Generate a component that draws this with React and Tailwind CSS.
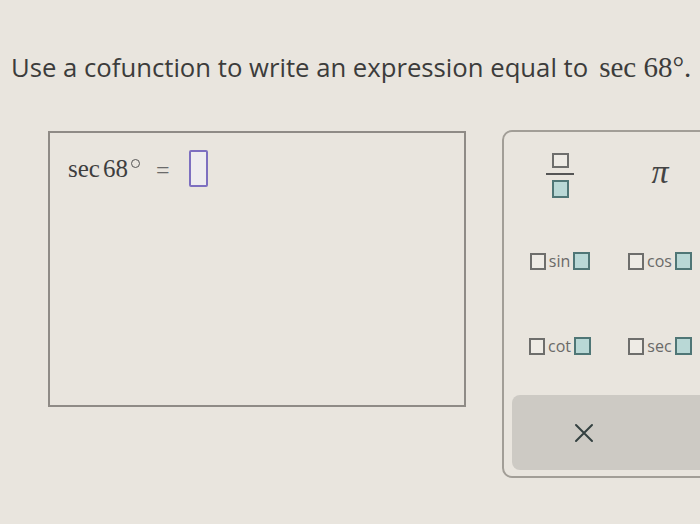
export default function App() {
  const sans = { fontFamily: '"Open Sans", "Noto Sans", sans-serif' };
  const serif = { fontFamily: '"Liberation Serif", "Times New Roman", serif' };
  const Plain = () => (
    <span className="inline-block w-[16px] h-[17px] border-2 border-[#6e6e6c] bg-[#eeebe5]" />
  );
  const Teal = () => (
    <span className="inline-block w-[17px] h-[18px] border-2 border-[#4f7676] bg-[#b9d8d6]" />
  );
  const Fn = ({ name }) => (
    <div className="flex items-center justify-center gap-[3px]">
      <Plain />
      <span className="text-[16px] leading-none text-[#6a6a68] pb-[1px]" style={sans}>{name}</span>
      <Teal />
    </div>
  );
  return (
    <div className="w-[700px] h-[524px] overflow-hidden bg-[#e9e5de] text-[#3c3c3b]">
      <div className="pl-[11px] pt-[53px] h-[96px] flex items-baseline whitespace-nowrap">
        <span className="text-[25.7px] leading-none" style={sans}>
          Use a cofunction to write an expression equal to
        </span>
        <span className="text-[29px] leading-none ml-[11px]" style={serif}>
          sec 68°.
        </span>
      </div>
      <div className="flex mt-[35px]">
        <div className="ml-[48px] w-[418px] h-[276px] border-2 border-[#8f8b86] shrink-0">
          <div className="flex items-center pl-[18px] pt-[16px]" style={serif}>
            <span className="text-[25px] leading-none text-[#3e3e3e]">sec</span>
            <span className="text-[25px] leading-none text-[#3e3e3e] ml-[3px]">68</span>
            <span className="inline-block w-[9px] h-[9px] rounded-full border-[1.5px] border-[#555] ml-[3px] -mt-[10px]" />
            <span className="text-[24px] leading-none text-[#6a6a6a] ml-[16px] mt-[4px]">=</span>
            <span className="ml-[20px] mt-[1px] inline-block w-[19px] h-[37px] border-2 border-[#7d6fc0] rounded-[2px] bg-[#eeecef]" />
          </div>
        </div>
        <div className="ml-[36px] -mt-[1px] w-[240px] h-[348px] shrink-0 rounded-[10px] border-2 border-[#a29e97] flex flex-col">
          <div className="grid grid-cols-[100px_100px] pl-[6px]">
            <div className="h-[86px] flex flex-col items-center justify-center gap-[5px] pt-[1px]">
              <span className="inline-block w-[17px] h-[15px] border-2 border-[#6e6e6c] bg-[#eeebe5]" />
              <span className="block w-[28px] h-[2px] bg-[#555]" />
              <span className="inline-block w-[17px] h-[18px] border-2 border-[#4f7676] bg-[#b9d8d6]" />
            </div>
            <div className="h-[86px] flex items-center justify-center">
              <span className="text-[34px] italic leading-none text-[#444] pb-[6px]" style={serif}>π</span>
            </div>
            <div className="h-[86px] flex items-center justify-center">
              <Fn name="sin" />
            </div>
            <div className="h-[86px] flex items-center justify-center">
              <Fn name="cos" />
            </div>
            <div className="h-[84px] flex items-center justify-center">
              <Fn name="cot" />
            </div>
            <div className="h-[84px] flex items-center justify-center">
              <Fn name="sec" />
            </div>
          </div>
          <div className="mt-[7px] ml-[8px] h-[75px] rounded-[8px] bg-[#cdcac4] flex items-center pl-[61px]">
            <svg width="22" height="22" viewBox="0 0 22 22" fill="none" stroke="#344141" strokeWidth="2" strokeLinecap="round">
              <path d="M3 3 L19 19 M19 3 L3 19" />
            </svg>
          </div>
        </div>
      </div>
    </div>
  );
}
